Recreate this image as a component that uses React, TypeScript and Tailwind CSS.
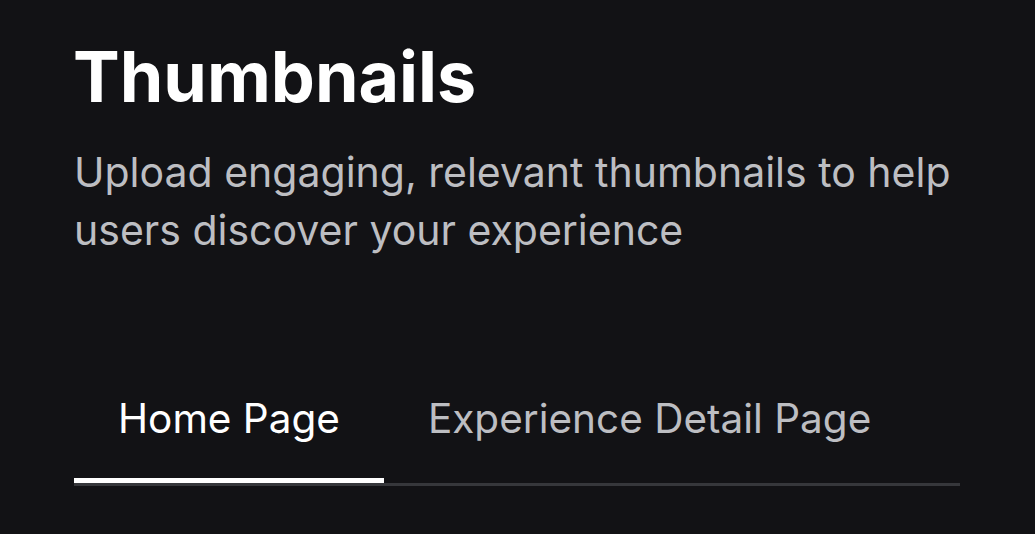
export default function App() {
  return (
    <div className="w-[1035px] h-[534px] bg-[#121215] overflow-hidden" style={{ fontFamily: "Inter, 'Noto Sans', sans-serif" }}>
      <div className="pl-[74px] pt-[35px] w-[960px]">
        <h1 className="text-[70px] leading-[84px] font-bold text-white -ml-[1px]">Thumbnails</h1>
        <p className="mt-[24px] text-[41px] leading-[58px] text-[#bdbec2] w-[886px]">
          Upload engaging, relevant thumbnails to help users discover your experience
        </p>
        <div className="mt-[136px] flex border-b-[3px] border-[#36373b]">
          <div className="relative px-[44px] pb-[40px] text-[40.5px] leading-[48px] text-white">
            Home Page
            <div className="absolute left-0 right-0 bottom-0 h-[5px] bg-white"></div>
          </div>
          <div className="px-[44px] pb-[40px] text-[40.5px] leading-[48px] text-[#bdbec2]">Experience Detail Page</div>
        </div>
      </div>
    </div>
  );
}
